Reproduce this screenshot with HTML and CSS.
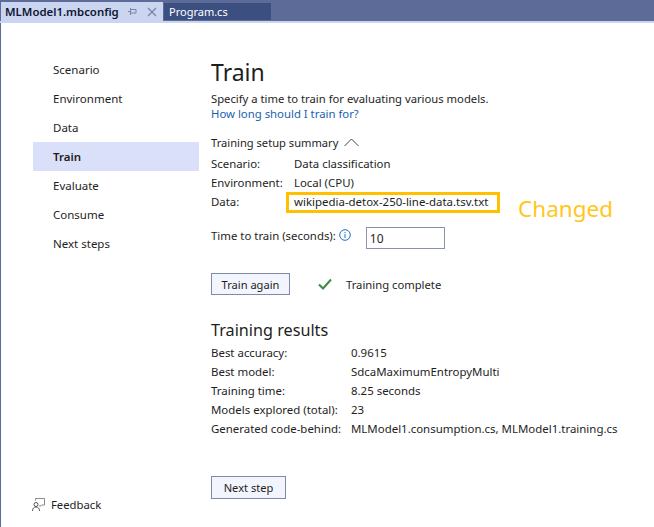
FILE: index.html
```html
<!DOCTYPE html>
<html lang="en">
<head>
<meta charset="utf-8">
<title>MLModel1.mbconfig</title>
<link rel="stylesheet" href="styles.css">
</head>
<body>
<div class="window">
  <header class="tabbar">
    <div class="tab tab-active">
      <span class="tab-name">MLModel1.mbconfig</span>
      <svg class="pin" width="9" height="9" viewBox="0 0 9 9"><path d="M0 4.500h2.500M2.500 1v7M2.500 2.500h5.500v3.500H2.500" fill="none" stroke="#7a85a6"/></svg>
      <svg class="close" width="10" height="10" viewBox="0 0 10 10"><path d="M1 1l8 8M9 1l-8 8" fill="none" stroke="#7a85a6" stroke-width="1.3"/></svg>
    </div>
    <div class="tab tab-other">Program.cs</div>
  </header>
  <div class="stripe"></div>
  <div class="content">
    <nav class="sidebar">
      <ul class="steps">
        <li class="step">Scenario</li>
        <li class="step">Environment</li>
        <li class="step">Data</li>
        <li class="step step-active">Train</li>
        <li class="step">Evaluate</li>
        <li class="step">Consume</li>
        <li class="step">Next steps</li>
      </ul>
      <div class="feedback">
        <svg class="feedback-icon" width="13" height="13" viewBox="0 0 13 13"><path d="M3.500 2.500V.5h9v6.500H9.500l-1.500 1.500V7" fill="none" stroke="#8a8a8a"/><circle cx="4" cy="6.500" r="2" fill="none" stroke="#555"/><path d="M.5 13c0-2.500 1.300-4 3.500-4s3.500 1.500 3.500 4" fill="none" stroke="#555"/></svg>
        <span>Feedback</span>
      </div>
    </nav>
    <main class="main">
      <h1 class="title">Train</h1>
      <p class="intro">Specify a time to train for evaluating various models.</p>
      <a class="link">How long should I train for?</a>
      <div class="summary-head">
        <span>Training setup summary</span>
        <svg width="15" height="9" viewBox="0 0 15 9"><path d="M.5 8l7-7 7 7" fill="none" stroke="#444" stroke-width="1"/></svg>
      </div>
      <dl class="summary">
        <dt>Scenario:</dt><dd>Data classification</dd>
        <dt>Environment:</dt><dd>Local (CPU)</dd>
        <dt>Data:</dt><dd><span class="highlight">wikipedia-detox-250-line-data.tsv.txt</span><span class="changed">Changed</span></dd>
      </dl>
      <div class="time-row">
        <span class="time-label">Time to train (seconds):</span>
        <svg class="info" width="12" height="12" viewBox="0 0 12 12"><circle cx="6" cy="6" r="5.300" fill="none" stroke="#1f6fc4"/><path d="M6 5v4M6 3v1.200" stroke="#1f6fc4" fill="none"/></svg>
        <span class="input">10</span>
      </div>
      <div class="train-row">
        <button class="btn" type="button">Train again</button>
        <svg class="check" width="14" height="12" viewBox="0 0 14 12"><path d="M1 6.500l4 4 8-9" fill="none" stroke="#3c8a3f" stroke-width="2"/></svg>
        <span class="status">Training complete</span>
      </div>
      <h2 class="results-title">Training results</h2>
      <dl class="results">
        <dt>Best accuracy:</dt><dd>0.9615</dd>
        <dt>Best model:</dt><dd>SdcaMaximumEntropyMulti</dd>
        <dt>Training time:</dt><dd>8.25 seconds</dd>
        <dt>Models explored (total):</dt><dd>23</dd>
        <dt>Generated code-behind:</dt><dd>MLModel1.consumption.cs, MLModel1.training.cs</dd>
      </dl>
      <button class="btn btn-next" type="button">Next step</button>
    </main>
  </div>
</div>
</body>
</html>
```
FILE: styles.css
```css
* { box-sizing: border-box; }
html, body { margin: 0; height: 100%; background: #fff; }
body { font-family: "Noto Sans", "Open Sans", sans-serif; font-size: 11.500px; color: #1e1e1e; }
.window { width: 654px; height: 527px; display: flex; flex-direction: column; overflow: hidden; }
.tabbar { height: 21px; background: #5d6b99; display: flex; align-items: flex-end; padding-left: 1px; gap: 1px; flex: none; }
.tab { height: 18px; display: flex; align-items: center; }
.tab-active { width: 162px; height: 19px; background: #ccd5f0; padding-left: 4px; color: #0e1633; font-weight: 600; font-size: 11.400px; }
.tab-name { flex: 1; }
.pin { margin-right: 10px; }
.close { margin-right: 6px; }
.tab-other { width: 107px; background: #3b4f81; color: #fff; padding: 0 0 1px 5px; font-size: 11px; border-bottom: 1px solid #5d6b99; }
.stripe { height: 2px; background: #ccd5f0; flex: none; }
.content { flex: 1; display: flex; border-left: 1px solid #5d6b99; min-height: 0; }
.sidebar { width: 198px; padding: 32px 0 0 32px; display: flex; flex-direction: column; flex: none; }
.steps { list-style: none; margin: 0; padding: 0; }
.step { height: 29px; line-height: 29px; padding-left: 20px; }
.step-active { background: #dae0f9; font-weight: 600; }
.feedback { margin-top: auto; margin-bottom: 15px; display: flex; align-items: center; gap: 6px; font-size: 11.300px; }
.feedback-icon { margin-left: -1px; }
.main { flex: 1; padding: 33px 0 0 12px; display: flex; flex-direction: column; align-items: flex-start; }
.title { font-size: 23px; font-weight: 400; margin: 0 0 2px; line-height: 32px; }
.intro { margin: 0; line-height: 18px; font-size: 11.250px; }
.link { color: #1b5fb0; font-size: 11.350px; line-height: 18px; margin-top: -3px; }
.summary-head { margin-top: 10px; display: flex; align-items: center; gap: 6px; line-height: 19px; font-size: 11.150px; }
.summary, .results { display: grid; margin: 0; row-gap: 0; line-height: 19px; }
.summary { grid-template-columns: 83px auto; margin-top: 2px; font-size: 11.400px; }
.results { grid-template-columns: 140px auto; font-size: 11.450px; }
dt { font-weight: 400; }
dd { margin: 0; }
.summary dd:last-child { display: flex; align-items: center; }
.highlight { border: 3px solid #ffc000; width: 214px; height: 21px; line-height: 13px; padding: 0 0 0 5px; margin: 0 0 -2px -8px; white-space: nowrap; font-size: 11.450px; }
.changed { color: #ffc71a; font-size: 22.500px; line-height: 19px; margin: 7px 0 -7px 18px; }
.time-row { margin-top: 16px; display: flex; align-items: center; }
.time-label { margin-bottom: 6px; font-size: 11.400px; }
.info { margin: 0 15px 6px 3px; }
.input { width: 79px; height: 22px; border: 1px solid #8a93ad; padding-left: 3px; line-height: 22px; font-size: 12px; }
.train-row { margin-top: 24px; display: flex; align-items: center; }
.btn { font: inherit; font-size: 11.100px; color: #1e1e1e; background: #f2f5fd; border: 1px solid #7f8aa8; width: 79px; height: 22px; padding: 0; }
.check { margin: 0 14px 0 28px; }
.status { font-size: 11.250px; }
.results-title { font-size: 16.200px; font-weight: 400; margin: 22px 0 0; line-height: 26px; }
.btn-next { margin-top: 38px; width: 75px; height: 23px; }
```
